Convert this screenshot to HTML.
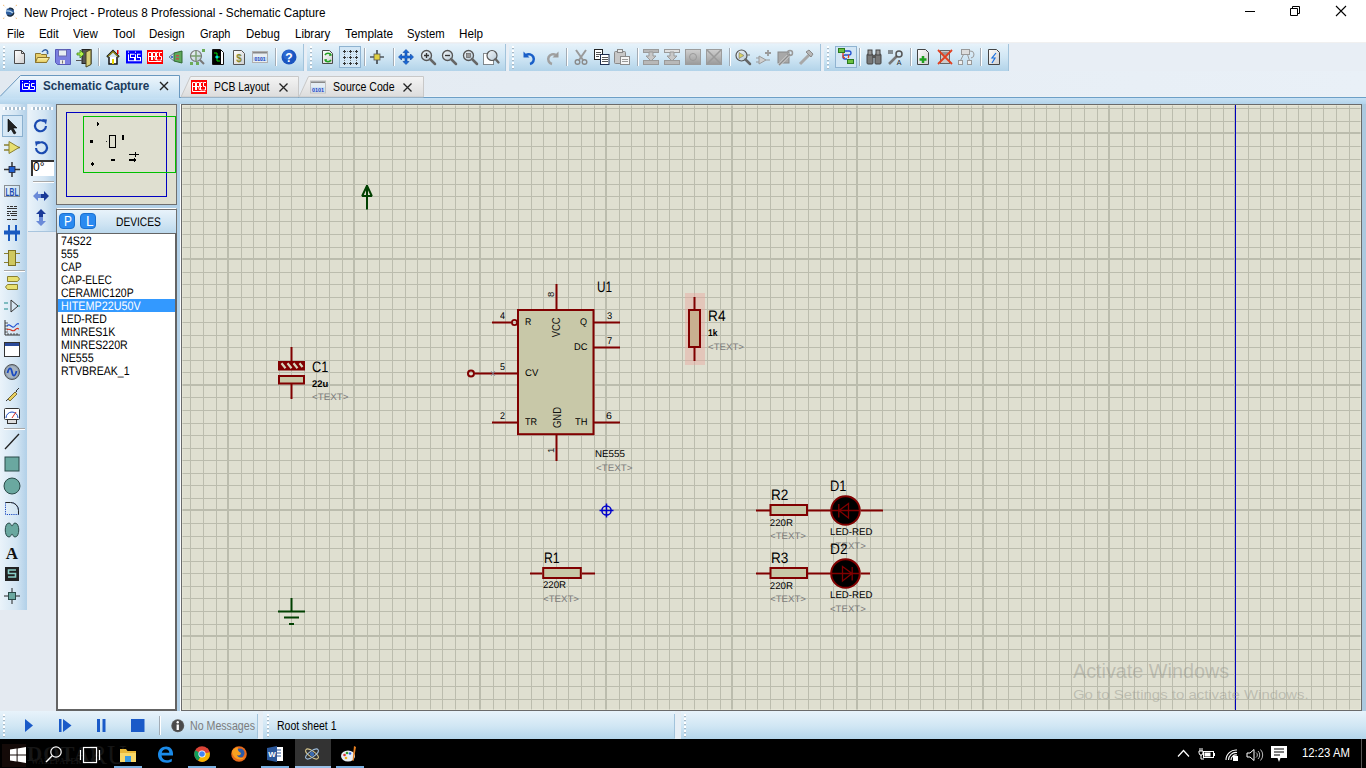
<!DOCTYPE html>
<html><head><meta charset="utf-8">
<style>
*{box-sizing:border-box;margin:0;padding:0}
html,body{width:1366px;height:768px;overflow:hidden;background:#e8eef5;font-family:"Liberation Sans",sans-serif;}
.a{position:absolute}
.t{position:absolute;white-space:nowrap;line-height:1}
svg{position:absolute;overflow:visible}
#title{left:0;top:0;width:1366px;height:42px;background:#fff}
#menuline{left:0;top:42px;width:1366px;height:1px;background:#f0f0f0}
.menu{font-size:12px;color:#000;top:28px}
.tb{top:44px;height:27px;background:linear-gradient(#e6f2fa,#d0e6f4 50%,#b2d3e9);border-right:1px solid #a2c3db}
.grip{width:3px;background:repeating-linear-gradient(#fff 0 2px,#a9b9c6 2px 3px,transparent 3px 4px);background-size:2px 4px;background-repeat:repeat-y}
.sep{width:2px;background:#a3acb5;border-right:1px solid #fff}
#tabstrip{left:0;top:71px;width:1366px;height:26px;background:linear-gradient(90deg,#e2e9f0,#e6edf4 50%,#e9f0f7)}
#tabline{left:0;top:96px;width:1366px;height:1px;background:#eaf1f6}
#tabline2{left:0;top:97px;width:1366px;height:1px;background:#6d9fc6}
#blueband{left:0;top:98px;width:1366px;height:6px;background:linear-gradient(#c6e1f5,#b3d3ea)}
#leftbg{left:0;top:104px;width:181px;height:607px;background:#e4eaf1}
#ovgap{left:56px;top:205px;width:125px;height:4px;background:#b3d1e8}
#col1{left:0;top:104px;width:27px;height:506px;background:linear-gradient(90deg,#eaf3fa,#d3e5f3 60%,#b2d0e8)}
#col2{left:28px;top:104px;width:28px;height:128px;background:linear-gradient(90deg,#eaf3fa,#d3e5f3 60%,#b2d0e8);border-bottom:1px solid #a8c5de}
#overview{left:56px;top:104px;width:121px;height:101px;background:#dfdfd0;border:1px solid #6f6f6f}
#devhdr{left:56px;top:208px;width:121px;height:26px;background:linear-gradient(#eaf4fb,#cfe4f3 60%,#b9d7ec);border-top:1px solid #fff;border-left:1px solid #6f6f6f;border-right:1px solid #6f6f6f}
#devhdr::before{content:"";position:absolute;left:-1px;right:-1px;top:0;height:1px;background:#6f6f6f}
#devlist{left:56px;top:233px;width:121px;height:478px;background:#fff;border:2px solid #646464;border-top:1px solid #646464}
.dev{font-size:11px;left:3px;color:#000}
#bluestrip{left:177px;top:104px;width:4px;height:607px;background:#b3d1e8}
#whiteline{left:180px;top:104px;width:1px;height:607px;background:#fafcfe}
#canvas{left:181px;top:104px;width:1181px;height:607px;background:#dfdfd0;border:1px solid #6a6a6a;overflow:hidden}
.grid{left:0;top:0}
#rightstrip{left:1362px;top:104px;width:4px;height:607px;background:#abc9df}
#status{left:0;top:711px;width:1366px;height:28px;background:linear-gradient(#e8f3fb,#d0e6f4 55%,#b4d5ea)}
#taskbar{left:0;top:739px;width:1366px;height:29px;background:#000}
.lbl{font-size:10px;color:#111}
.big{font-size:15px;color:#111}
.gt{font-size:9.5px;color:#8a8a8a}
</style></head><body>
<div id="title" class="a"></div>
<div id="menuline" class="a"></div>
<div class="t" style="left:23.50px;top:6.59px;font-size:12px;color:#000;transform:scaleX(0.9764);transform-origin:0 0;">New Project - Proteus 8 Professional - Schematic Capture</div>
<div class="t" style="left:7.30px;top:27.89px;font-size:12px;color:#000;transform:scaleX(0.9171);transform-origin:0 0;">File</div>
<div class="t" style="left:39.30px;top:27.89px;font-size:12px;color:#000;transform:scaleX(0.9469);transform-origin:0 0;">Edit</div>
<div class="t" style="left:73.20px;top:27.89px;font-size:12px;color:#000;transform:scaleX(0.9574);transform-origin:0 0;">View</div>
<div class="t" style="left:112.60px;top:27.89px;font-size:12px;color:#000;transform:scaleX(1.0136);transform-origin:0 0;">Tool</div>
<div class="t" style="left:149.00px;top:27.89px;font-size:12px;color:#000;transform:scaleX(0.9572);transform-origin:0 0;">Design</div>
<div class="t" style="left:199.50px;top:27.89px;font-size:12px;color:#000;transform:scaleX(0.9132);transform-origin:0 0;">Graph</div>
<div class="t" style="left:245.50px;top:27.89px;font-size:12px;color:#000;transform:scaleX(0.9548);transform-origin:0 0;">Debug</div>
<div class="t" style="left:294.50px;top:27.89px;font-size:12px;color:#000;transform:scaleX(0.9591);transform-origin:0 0;">Library</div>
<div class="t" style="left:344.70px;top:27.89px;font-size:12px;color:#000;transform:scaleX(0.9877);transform-origin:0 0;">Template</div>
<div class="t" style="left:407.00px;top:27.89px;font-size:12px;color:#000;transform:scaleX(0.9400);transform-origin:0 0;">System</div>
<div class="t" style="left:459.30px;top:27.89px;font-size:12px;color:#000;transform:scaleX(0.9757);transform-origin:0 0;">Help</div>
<svg style="left:1244px;top:5px" width="104" height="14"><path d="M1 6.5h10" stroke="#000"/><path d="M46.5 3.5h7v7h-7z" fill="none" stroke="#000"/><path d="M48.5 3.5v-2h7v7h-2" fill="none" stroke="#000"/><path d="M92 1l10 10M102 1l-10 10" stroke="#000" stroke-width="1.1"/></svg>
<svg style="left:3px;top:4px" width="16" height="16"><path d="M0.5 1.3L13.3 14.3M13.3 1.3L0.5 14.3" stroke="#f0f0f0" stroke-width="1"/><g fill="#f6c88a"><rect x="0" y="0.8" width="1.2" height="1.2"/><rect x="12.8" y="0.8" width="1.2" height="1.2"/><rect x="0" y="13.8" width="1.2" height="1.2"/><rect x="12.8" y="13.8" width="1.2" height="1.2"/></g><circle cx="7" cy="8" r="4.1" fill="#2f5f9f"/><path d="M3.2 7.2c2-.8 4.5 0 7 2" stroke="#b8d8f0" stroke-width="1.3" fill="none"/><path d="M4.5 11.2a4 4 0 0 0 6.3-2.5" stroke="#1a2a3a" stroke-width="1.6" fill="none"/><path d="M6 4.3a4 4 0 0 1 4.5 2" stroke="#1a2a3a" stroke-width="1.2" fill="none"/></svg>
<svg width="0" height="0" style="position:absolute"><defs>
<linearGradient id="gdoc" x1="0" y1="0" x2="1" y2="1"><stop offset="0" stop-color="#fff"/><stop offset="1" stop-color="#cfcfcf"/></linearGradient>
<linearGradient id="gfold" x1="0" y1="0" x2="0" y2="1"><stop offset="0" stop-color="#fff6b0"/><stop offset="1" stop-color="#e3c85a"/></linearGradient>
<linearGradient id="gmag" x1="0" y1="0" x2="1" y2="1"><stop offset="0" stop-color="#f4f8fb"/><stop offset="1" stop-color="#b7c9d6"/></linearGradient>
<linearGradient id="ggray" x1="0" y1="0" x2="0" y2="1"><stop offset="0" stop-color="#cfcfcf"/><stop offset="1" stop-color="#9a9a9a"/></linearGradient>
</defs></svg><div class="a tb" style="left:0px;width:304px"></div>
<div class="a grip" style="left:3px;top:46px;height:23px"></div>
<div class="a tb" style="left:307px;width:199px"></div>
<div class="a grip" style="left:310px;top:46px;height:23px"></div>
<div class="a tb" style="left:509px;width:312px"></div>
<div class="a grip" style="left:512px;top:46px;height:23px"></div>
<div class="a tb" style="left:824px;width:185px"></div>
<div class="a grip" style="left:827px;top:46px;height:23px"></div>
<div class="a sep" style="left:98px;top:48px;height:18px"></div>
<div class="a sep" style="left:275px;top:48px;height:18px"></div>
<div class="a sep" style="left:364px;top:48px;height:18px"></div>
<div class="a sep" style="left:393px;top:48px;height:18px"></div>
<div class="a sep" style="left:566px;top:48px;height:18px"></div>
<div class="a sep" style="left:637px;top:48px;height:18px"></div>
<div class="a sep" style="left:729px;top:48px;height:18px"></div>
<div class="a sep" style="left:859px;top:48px;height:18px"></div>
<div class="a sep" style="left:910px;top:48px;height:18px"></div>
<div class="a sep" style="left:980px;top:48px;height:18px"></div>
<div class="a" style="left:339px;top:46px;width:22px;height:22px;background:#d2e6f5;border:1px solid #8fb3d1"></div>
<div class="a" style="left:835px;top:46px;width:22px;height:22px;background:#d2e6f5;border:1px solid #8fb3d1"></div>
<svg style="left:12px;top:49px" width="16" height="16" viewBox="0 0 16 16"><path d="M2.5 1.5h7l3 3v10h-10z" fill="url(#gdoc)" stroke="#4a4a4a"/><path d="M9.5 1.5v3h3" fill="none" stroke="#4a4a4a"/></svg>
<svg style="left:34px;top:49px" width="16" height="16" viewBox="0 0 16 16"><path d="M1.5 4.5h5l1 1h5v8h-11z" fill="#e8cf6a" stroke="#8a7530"/><path d="M3.5 8.5h12l-3 5h-11z" fill="url(#gfold)" stroke="#8a7530"/><path d="M8 3c2-3 5-3 6 0" fill="none" stroke="#2c5aa0" stroke-width="1.3"/><path d="M12.5 2.5l2.5 1.5-2 1.5z" fill="#2c5aa0"/></svg>
<svg style="left:55px;top:49px" width="16" height="16" viewBox="0 0 16 16"><path d="M0.5 0.5h15v15h-13l-2-2z" fill="#7b7fe0" stroke="#5558b8"/><rect x="3.5" y="1" width="8" height="6" fill="#e8eef2" stroke="#6a6ab0"/><rect x="5" y="11" width="5" height="4" fill="#e8e8e8"/><rect x="7" y="11.5" width="1" height="3" fill="#777"/></svg>
<svg style="left:76px;top:49px" width="16" height="16" viewBox="0 0 16 16"><rect x="6" y="0.5" width="9" height="14" fill="#555" stroke="#222"/><path d="M10 3l5-2.5v15l-5 2.5z" fill="#d7cf78" stroke="#4a4520"/><path d="M1 4h3v-3l4 4-4 4v-3h-3z" fill="#b6ef4a" stroke="#3a8a20" stroke-width=".8"/><path d="M0 11.5h6" stroke="#555"/></svg>
<svg style="left:105px;top:49px" width="16" height="16" viewBox="0 0 16 16"><path d="M2 8l6-6 6 6" fill="none" stroke="#111" stroke-width="2"/><path d="M4 8v7h8v-7" fill="#fff" stroke="#111" stroke-width="1.5"/><path d="M3 7.5l5-5 5 5" fill="none" stroke="#f0e020" stroke-width="1"/><rect x="7" y="10" width="2" height="5" fill="#e8d800"/><rect x="12" y="1" width="1.5" height="4" fill="#e00"/></svg>
<svg style="left:126px;top:49px" width="16" height="16" viewBox="0 0 16 16"><g transform="translate(0,1.5) scale(1,1.08)"><rect x="0" y="0" width="16" height="12" fill="#0000ff"/><g fill="none" stroke="#fff" stroke-width="1"><path d="M2.5 3.5V9.5H8.5V6.5H4.5V3.5H8.5M9.5 3.5V9.5H14.5V6.5H11.5V3.5H14.5"/></g><rect x="2" y="1" width="1" height="1" fill="#fff"/><rect x="9" y="1" width="1" height="1" fill="#fff"/></g></svg>
<svg style="left:147px;top:50px" width="16" height="14" viewBox="0 0 16 14"><rect x="0" y="0" width="16" height="14" fill="#ff0000"/><path d="M1.5 11.5V2.5H4.5V10M1.5 6.5H4.5M5.5 10V2.5H8.5V6.5H5.5M7.5 6.5L8.5 10M11.5 2.5H9.5V10H11.5M9.5 6.5H11M15 2.5H12.5V6.5H14.5V10H12.5M1.5 11.5H14.5" fill="none" stroke="#fff" stroke-width="1"/></svg>
<svg style="left:168px;top:49px" width="16" height="16" viewBox="0 0 16 16"><path d="M6 4l8-2v12l-8-2z" fill="#5fa85a" stroke="#2f6a30"/><rect x="8" y="6" width="3" height="1.5" fill="#c05050"/><rect x="8" y="9" width="3" height="1.5" fill="#c05050"/><path d="M6 4l-5 4 5 4" fill="none" stroke="#6d7a88"/><circle cx="4" cy="8" r="1" fill="#2050c0"/></svg>
<svg style="left:189px;top:49px" width="16" height="16" viewBox="0 0 16 16"><circle cx="7" cy="7" r="5.5" fill="url(#gmag)" stroke="#777" stroke-width="1.2"/><path d="M7 2v10M2 7h10" stroke="#7aa070" stroke-width="1.5"/><path d="M11 11l4 4" stroke="#777" stroke-width="2"/><rect x="13" y="0" width="3" height="3" fill="#6bab58"/><rect x="1" y="13" width="3" height="3" fill="#6bab58"/><rect x="7" y="13" width="3" height="3" fill="#6bab58"/></svg>
<svg style="left:211px;top:49px" width="16" height="16" viewBox="0 0 16 16"><path d="M1.5 0.5h8l3 3v12h-11z" fill="#fff" stroke="#111"/><rect x="2" y="1" width="8" height="14" fill="#000"/><path d="M3 4h3v8h3M4 8h5" stroke="#00e000" fill="none"/><circle cx="6" cy="8" r="1.5" fill="#00d8e8"/></svg>
<svg style="left:232px;top:49px" width="16" height="16" viewBox="0 0 16 16"><path d="M1.5 1.5h8l3 3v11h-11z" fill="url(#gdoc)" stroke="#555"/><text x="7" y="13" font-size="10" font-weight="bold" fill="#8b8b30" text-anchor="middle" font-family="Liberation Sans">$</text></svg>
<svg style="left:252px;top:49px" width="16" height="16" viewBox="0 0 16 16"><rect x="0.5" y="2.5" width="15" height="11" fill="#e8eef2" stroke="#b0b0b0"/><rect x="1" y="3" width="14" height="1.5" fill="#888"/><rect x="1" y="8" width="14" height="4" fill="#c8def0"/><text x="8" y="12" font-size="5" font-weight="bold" fill="#2040c0" text-anchor="middle" font-family="Liberation Sans">0101</text></svg>
<svg style="left:281px;top:49px" width="16" height="16" viewBox="0 0 16 16"><circle cx="8" cy="8" r="7.5" fill="#1a55c0"/><circle cx="7" cy="6" r="5" fill="#3a7ae0" opacity=".5"/><text x="8" y="13" font-size="12" font-weight="bold" fill="#fff" text-anchor="middle" font-family="Liberation Sans">?</text></svg>
<svg style="left:320px;top:49px" width="16" height="16" viewBox="0 0 16 16"><path d="M2.5 1.5h7l3 3v10h-10z" fill="url(#gdoc)" stroke="#4a4a4a"/><path d="M5 6a3.5 3.5 0 0 1 6 0M11 11a3.5 3.5 0 0 1-6 0" fill="none" stroke="#20a020" stroke-width="1.5"/><path d="M10 4l2 2.5-3 .5zM6 13l-2-2.5 3-.5z" fill="#20a020"/></svg>
<svg style="left:342px;top:49px" width="16" height="16" viewBox="0 0 16 16"><g fill="#333"><rect x="1" y="2" width="3" height="1"/><rect x="2" y="1" width="1" height="3"/><rect x="1" y="8" width="3" height="1"/><rect x="2" y="7" width="1" height="3"/><rect x="1" y="14" width="3" height="1"/><rect x="2" y="13" width="1" height="3"/><rect x="7" y="2" width="3" height="1"/><rect x="8" y="1" width="1" height="3"/><rect x="7" y="8" width="3" height="1"/><rect x="8" y="7" width="1" height="3"/><rect x="7" y="14" width="3" height="1"/><rect x="8" y="13" width="1" height="3"/><rect x="13" y="2" width="3" height="1"/><rect x="14" y="1" width="1" height="3"/><rect x="13" y="8" width="3" height="1"/><rect x="14" y="7" width="1" height="3"/><rect x="13" y="14" width="3" height="1"/><rect x="14" y="13" width="1" height="3"/><rect x="5" y="2" width="1" height="1" fill="#777"/><rect x="5" y="8" width="1" height="1" fill="#777"/><rect x="5" y="14" width="1" height="1" fill="#777"/><rect x="11" y="2" width="1" height="1" fill="#777"/><rect x="11" y="8" width="1" height="1" fill="#777"/><rect x="11" y="14" width="1" height="1" fill="#777"/><rect x="2" y="5" width="1" height="1" fill="#777"/><rect x="2" y="11" width="1" height="1" fill="#777"/><rect x="8" y="5" width="1" height="1" fill="#777"/><rect x="8" y="11" width="1" height="1" fill="#777"/><rect x="14" y="5" width="1" height="1" fill="#777"/><rect x="14" y="11" width="1" height="1" fill="#777"/></g></svg>
<svg style="left:369px;top:49px" width="16" height="16" viewBox="0 0 16 16"><path d="M8 1v14M1 8h14" stroke="#111" stroke-width="1.2"/><rect x="5" y="5" width="6" height="6" fill="#e0d040" stroke="#555" stroke-width=".8"/></svg>
<svg style="left:398px;top:49px" width="16" height="16" viewBox="0 0 16 16"><path d="M8 0.5l3 3h-2v3.5h3.5v-2l3 3-3 3v-2h-3.5v3.5h2l-3 3-3-3h2v-3.5h-3.5v2l-3-3 3-3v2h3.5v-3.5h-2z" fill="#1a6ad8" stroke="#0b3f9a" stroke-width=".6"/></svg>
<svg style="left:420px;top:49px" width="16" height="16" viewBox="0 0 16 16"><circle cx="6.5" cy="6.5" r="5" fill="url(#gmag)" stroke="#555" stroke-width="1.3"/><path d="M4 6.5h5M6.5 4v5" stroke="#333" stroke-width="1.3"/><path d="M10 10l5 5" stroke="#666" stroke-width="2.5" stroke-linecap="round"/></svg>
<svg style="left:441px;top:49px" width="16" height="16" viewBox="0 0 16 16"><circle cx="6.5" cy="6.5" r="5" fill="url(#gmag)" stroke="#555" stroke-width="1.3"/><path d="M4 6.5h5" stroke="#333" stroke-width="1.3"/><path d="M10 10l5 5" stroke="#666" stroke-width="2.5" stroke-linecap="round"/></svg>
<svg style="left:462px;top:49px" width="16" height="16" viewBox="0 0 16 16"><circle cx="6.5" cy="6.5" r="5" fill="url(#gmag)" stroke="#555" stroke-width="1.3"/><rect x="4.5" y="4.5" width="4" height="4" fill="#999" stroke="#555" stroke-width=".6"/><path d="M10 10l5 5" stroke="#666" stroke-width="2.5" stroke-linecap="round"/></svg>
<svg style="left:483px;top:49px" width="16" height="16" viewBox="0 0 16 16"><rect x="0.5" y="4.5" width="10" height="11" fill="#fff" stroke="#222" stroke-dasharray="1 1"/><circle cx="9" cy="6.5" r="5" fill="url(#gmag)" stroke="#555" stroke-width="1.2"/><path d="M12.5 10l3 3.5" stroke="#666" stroke-width="2.3" stroke-linecap="round"/></svg>
<svg style="left:522px;top:49px" width="16" height="16" viewBox="0 0 16 16"><path d="M3 3v5h5" fill="none" stroke="#1a5fc8" stroke-width="0"/><path d="M1.5 2.5l0 6 6 0z" fill="#1a5fc8"/><path d="M4 6a5 5 0 1 1 4 9" fill="none" stroke="#1a5fc8" stroke-width="2.5"/></svg>
<svg style="left:544px;top:49px" width="16" height="16" viewBox="0 0 16 16"><path d="M14.5 2.5l0 6-6 0z" fill="#9a9a9a"/><path d="M12 6a5 5 0 1 0-4 9" fill="none" stroke="#a0a0a0" stroke-width="2.5"/></svg>
<svg style="left:573px;top:49px" width="16" height="16" viewBox="0 0 16 16"><path d="M3 1l7 10M13 1l-7 10" stroke="#9a9a9a" stroke-width="2"/><circle cx="4.5" cy="13" r="2.3" fill="none" stroke="#8a8a8a" stroke-width="1.4"/><circle cx="11.5" cy="13" r="2.3" fill="none" stroke="#8a8a8a" stroke-width="1.4"/></svg>
<svg style="left:594px;top:49px" width="16" height="16" viewBox="0 0 16 16"><rect x="0.5" y="0.5" width="8" height="10" fill="#fff" stroke="#222"/><g fill="#555"><rect x="2" y="3" width="5" height="1"/><rect x="2" y="5" width="5" height="1"/><rect x="2" y="7" width="3" height="1"/></g><rect x="6.5" y="5.5" width="8.5" height="10" fill="#fff" stroke="#1e2e50"/><g fill="#555"><rect x="8" y="8" width="6" height="1"/><rect x="8" y="10" width="6" height="1"/><rect x="8" y="12" width="6" height="1"/></g></svg>
<svg style="left:614px;top:49px" width="16" height="16" viewBox="0 0 16 16"><rect x="0.5" y="2.5" width="11" height="12" rx="1" fill="#c8c8c8" stroke="#8a8a8a"/><rect x="3.5" y="0.5" width="5" height="3" fill="#e8e8e8" stroke="#888"/><rect x="6.5" y="7.5" width="9" height="8" fill="#f6f6f6" stroke="#8a8a8a"/><g fill="#9a9a9a"><rect x="8" y="10" width="6" height="1"/><rect x="8" y="12" width="6" height="1"/></g></svg>
<svg style="left:643px;top:49px" width="16" height="16" viewBox="0 0 16 16"><rect x="0.5" y="0.5" width="15" height="3" fill="#b8b8b8" stroke="#9a9a9a"/><rect x="0.5" y="11.5" width="15" height="4" fill="#b8b8b8" stroke="#9a9a9a"/><path d="M6 3h4v4h3l-5 5-5-5h3z" fill="#c8c8c8" stroke="#9a9a9a"/></svg>
<svg style="left:664px;top:49px" width="16" height="16" viewBox="0 0 16 16"><rect x="0.5" y="0.5" width="15" height="3" fill="#e0e0e0" stroke="#9a9a9a"/><rect x="0.5" y="11.5" width="15" height="4" fill="#b8b8b8" stroke="#9a9a9a"/><path d="M6 3h4v4h3l-5 5-5-5h3z" fill="#c8c8c8" stroke="#9a9a9a"/></svg>
<svg style="left:685px;top:49px" width="16" height="16" viewBox="0 0 16 16"><rect x="0.5" y="0.5" width="15" height="15" fill="url(#ggray)" stroke="#9c9c9c"/><circle cx="8" cy="8" r="3.5" fill="none" stroke="#9a9a9a"/></svg>
<svg style="left:706px;top:49px" width="16" height="16" viewBox="0 0 16 16"><rect x="0.5" y="0.5" width="15" height="15" fill="url(#ggray)" stroke="#9c9c9c"/><path d="M1 1l14 14M15 1l-14 14" stroke="#9a9a9a" stroke-width="1.5"/></svg>
<svg style="left:735px;top:49px" width="16" height="16" viewBox="0 0 16 16"><circle cx="6.5" cy="6.5" r="5.5" fill="url(#gmag)" stroke="#555" stroke-width="1.2"/><path d="M4 3.5v6l5-3z" fill="#d8d060" stroke="#777" stroke-width=".6"/><path d="M10.5 10.5l4.5 4.5" stroke="#666" stroke-width="2.5" stroke-linecap="round"/><path d="M12 6h3" stroke="#777"/></svg>
<svg style="left:756px;top:49px" width="16" height="16" viewBox="0 0 16 16"><path d="M3 7v8l7-4z" fill="#cfcfcf" stroke="#9a9a9a"/><path d="M0 9h3M0 13h3M10 11h4" stroke="#9a9a9a"/><path d="M12 1v6M9 4h6" stroke="#9a9a9a" stroke-width="1.8"/></svg>
<svg style="left:777px;top:49px" width="16" height="16" viewBox="0 0 16 16"><rect x="1" y="3" width="11" height="11" fill="#a8a8a8" stroke="#888"/><path d="M2 16l11-11" stroke="#d0d0d0" stroke-width="3"/><path d="M2 16l11-11" stroke="#8a8a8a" stroke-width="1.5"/><circle cx="13" cy="4" r="2.5" fill="none" stroke="#9a9a9a" stroke-width="1.5"/></svg>
<svg style="left:798px;top:49px" width="16" height="16" viewBox="0 0 16 16"><path d="M2 15l9-9" stroke="#a8a8a8" stroke-width="3"/><path d="M8 3l3-2 4 4-2 3z" fill="#b8b8b8" stroke="#8a8a8a"/></svg>
<svg style="left:838px;top:48px" width="16" height="16" viewBox="0 0 16 16"><rect x="0.5" y="0.5" width="6" height="4" fill="#6cc040" stroke="#2a7a20"/><rect x="9.5" y="11.5" width="6" height="4" fill="#6cc040" stroke="#2a7a20"/><path d="M7 3h4a2 2 0 0 1 0 4h-4a2 2 0 0 0 0 4h2" fill="none" stroke="#2050d0" stroke-width="1.3"/><path d="M5 5v3a2 2 0 0 0 2 2M10 7a2 2 0 0 1 0 3" fill="none" stroke="#e04020" stroke-width="1.3"/></svg>
<svg style="left:866px;top:49px" width="16" height="16" viewBox="0 0 16 16"><rect x="1" y="5" width="6" height="10" rx="1" fill="#777" stroke="#444"/><rect x="9" y="5" width="6" height="10" rx="1" fill="#777" stroke="#444"/><rect x="2" y="1" width="4" height="5" fill="#999" stroke="#444"/><rect x="10" y="1" width="4" height="5" fill="#999" stroke="#444"/><rect x="6" y="6" width="4" height="3" fill="#555"/></svg>
<svg style="left:887px;top:49px" width="16" height="16" viewBox="0 0 16 16"><path d="M1 2h5M1 4h5" stroke="#333"/><path d="M2 15l8-8" stroke="#777" stroke-width="2.5"/><circle cx="12" cy="5" r="3" fill="none" stroke="#555" stroke-width="1.5"/><text x="12" y="16" font-size="7" fill="#222" text-anchor="middle" font-family="Liberation Sans">A</text></svg>
<svg style="left:916px;top:49px" width="14" height="16" viewBox="0 0 14 16"><path d="M1.5 0.5h8l3 3v12h-11z" fill="url(#gdoc)" stroke="#444"/><path d="M7 7v7M3.5 10.5h7" stroke="#20a020" stroke-width="2.5"/></svg>
<svg style="left:937px;top:49px" width="16" height="16" viewBox="0 0 16 16"><rect x="3.5" y="1.5" width="9" height="13" fill="#ccc" stroke="#666"/><rect x="5" y="3" width="6" height="3" fill="#999"/><path d="M1 1l14 14M15 1l-14 14" stroke="#e04020" stroke-width="1.8"/></svg>
<svg style="left:958px;top:49px" width="16" height="16" viewBox="0 0 16 16"><rect x="3.5" y="0.5" width="8" height="5" fill="#ddd" stroke="#999"/><rect x="0.5" y="11.5" width="4" height="4" fill="#eee" stroke="#999"/><rect x="9.5" y="11.5" width="4" height="4" fill="#eee" stroke="#999"/><path d="M2.5 11.5l3-6M11.5 11.5l-2-6M12 2a3 3 0 0 1 1 7" fill="none" stroke="#999"/></svg>
<svg style="left:987px;top:49px" width="14" height="16" viewBox="0 0 14 16"><path d="M1.5 0.5h8l3 3v12h-11z" fill="url(#gdoc)" stroke="#444"/><path d="M9 4l-4 5h3l-3 5" fill="none" stroke="#1a70e0" stroke-width="1.2"/></svg>

<div id="tabstrip" class="a"></div>
<div id="tabline" class="a"></div>
<div id="tabline2" class="a"></div>
<div id="blueband" class="a"></div>
<svg style="left:0;top:74px" width="182" height="24"><defs><linearGradient id="gtab" x1="0" y1="0" x2="0" y2="1"><stop offset="0" stop-color="#eef6fc"/><stop offset="1" stop-color="#c2def2"/></linearGradient>
<linearGradient id="gtab2" x1="0" y1="0" x2="0" y2="1"><stop offset="0" stop-color="#f4f4f4"/><stop offset="1" stop-color="#dcdcdc"/></linearGradient></defs>
<path d="M0 22.5L20.5 1.5H179.5V24H0z" fill="url(#gtab)"/><path d="M0 22.5L20.5 1.5H179.5V24" fill="none" stroke="#6a98bf"/></svg>
<svg style="left:20px;top:80px" width="16" height="12"><rect x="0" y="0" width="16" height="12" fill="#0000ff"/><g fill="none" stroke="#fff" stroke-width="1"><path d="M2.5 3.5V9.5H8.5V6.5H4.5V3.5H8.5M9.5 3.5V9.5H14.5V6.5H11.5V3.5H14.5"/></g><rect x="2" y="1" width="1" height="1" fill="#fff"/><rect x="9" y="1" width="1" height="1" fill="#fff"/></svg>
<div class="t" style="left:42.80px;top:79.63px;font-size:12.5px;color:#1b3b5c;font-weight:bold;transform:scaleX(0.9382);transform-origin:0 0;">Schematic Capture</div>
<svg style="left:159px;top:81px" width="10" height="10"><path d="M1 1l8 8M9 1l-8 8" stroke="#222" stroke-width="1.4"/></svg>
<svg style="left:180px;top:75px" width="120" height="23"><path d="M1 22L10.5 1.5H118.5V22z" fill="url(#gtab2)" stroke="#c8c8c8"/></svg>
<svg style="left:191px;top:80px" width="16" height="14"><rect x="0" y="0" width="16" height="14" fill="#ff0000"/><path d="M1.5 11.5V2.5H4.5V10M1.5 6.5H4.5M5.5 10V2.5H8.5V6.5H5.5M7.5 6.5L8.5 10M11.5 2.5H9.5V10H11.5M9.5 6.5H11M15 2.5H12.5V6.5H14.5V10H12.5M1.5 11.5H14.5" fill="none" stroke="#fff" stroke-width="1"/></svg>
<div class="t" style="left:213.50px;top:81.39px;font-size:12px;color:#000;transform:scaleX(0.8641);transform-origin:0 0;">PCB Layout</div>
<svg style="left:279px;top:83px" width="9" height="9"><path d="M.5 .5l8 8M8.5 .5l-8 8" stroke="#222" stroke-width="1.3"/></svg>
<svg style="left:298px;top:75px" width="128" height="23"><path d="M1 22L10.5 1.5H125.5V22z" fill="url(#gtab2)" stroke="#c8c8c8"/></svg>
<svg style="left:310px;top:80px" width="16" height="14"><rect x="0.5" y="1" width="15" height="12" fill="#e4ecf2" stroke="#c0c0c0"/><rect x="1" y="1.5" width="14" height="1.5" fill="#888"/><rect x="1" y="7" width="14" height="5" fill="#cfe2f2"/><text x="8" y="11.5" font-size="5.5" font-weight="bold" fill="#2040c0" text-anchor="middle" font-family="Liberation Sans">0101</text></svg>
<div class="t" style="left:332.50px;top:81.39px;font-size:12px;color:#000;transform:scaleX(0.8786);transform-origin:0 0;">Source Code</div>
<svg style="left:403px;top:83px" width="9" height="9"><path d="M.5 .5l8 8M8.5 .5l-8 8" stroke="#222" stroke-width="1.3"/></svg>

<div id="leftbg" class="a"></div>
<div id="col1" class="a"></div>
<div id="col2" class="a"></div>
<div class="a" style="left:3px;top:107px;width:22px;height:3px;background:repeating-linear-gradient(90deg,#fff 0 2px,#a8bfd2 2px 4px)"></div>
<div class="a" style="left:31px;top:107px;width:22px;height:3px;background:repeating-linear-gradient(90deg,#fff 0 2px,#a8bfd2 2px 4px)"></div>
<div class="a" style="left:2px;top:115px;width:21px;height:22px;background:#d6e8f6;border:1px solid #8bb0cf"></div>
<svg style="left:4px;top:118px" width="16" height="16" viewBox="0 0 16 16"><path d="M4 1v13l3-3 3 5 2-1-3-5h4z" fill="#222" stroke="#000" stroke-width=".6"/></svg>
<svg style="left:4px;top:140px" width="16" height="16" viewBox="0 0 16 16"><path d="M5 1.5v12l10-6z" fill="#e8e070" stroke="#8a8030"/><path d="M0 5h5M0 10h5M14 7.5h2" stroke="#8a8030" stroke-width="1.3"/></svg>
<svg style="left:4px;top:161px" width="16" height="16" viewBox="0 0 16 16"><path d="M8 1v15M0 8.5h16" stroke="#333" stroke-width="1.5"/><rect x="5" y="5.5" width="6" height="6" fill="#2060d0" stroke="#223" stroke-width=".8"/></svg>
<svg style="left:4px;top:183px" width="16" height="16" viewBox="0 0 16 16"><rect x=".5" y="2.5" width="15" height="11" fill="none" stroke="#333" stroke-dasharray="1 1"/><text x="8" y="12.5" font-size="11" font-weight="bold" fill="#1a4ab0" text-anchor="middle" font-family="Liberation Sans" textLength="13" lengthAdjust="spacingAndGlyphs">LBL</text></svg>
<svg style="left:4px;top:205px" width="16" height="16" viewBox="0 0 16 16"><path d="M3 1.5h2M6 1.5h3M10 1.5h3M3 3.5h10M3 6.5h4M8 6.5h5M3 8.5h2M6 8.5h7M3 10.5h3M7 10.5h6M3 14.5h4M8 14.5h5" stroke="#333" stroke-width="1.1"/></svg>
<svg style="left:4px;top:224px" width="16" height="18" viewBox="0 0 16 18"><path d="M5 1v16M12 1v16" stroke="#1a5ac0" stroke-width="2"/><rect x="0" y="6.5" width="16" height="4" fill="#1a5ac0"/></svg>
<div class="a" style="left:4px;top:270px;width:21px;height:2px;background:#a8a8a8;border-bottom:1px solid #fff"></div>
<div class="a" style="left:4px;top:428px;width:21px;height:2px;background:#a8a8a8;border-bottom:1px solid #fff"></div>
<svg style="left:4px;top:248px" width="16" height="19" viewBox="0 0 16 19"><path d="M0 5.5h16M0 14.5h16" stroke="#8a8030" stroke-width="1.2"/><rect x="4.5" y="2.5" width="7" height="15" fill="#cfc860" stroke="#7a7025"/></svg>
<svg style="left:4px;top:275px" width="16" height="16" viewBox="0 0 16 16"><path d="M3.5 1.5h10l2 2.5-2 2.5h-10z" fill="#e8e070" stroke="#8a8030"/><path d="M3.5 9.5h10v5h-10l-2-2.5z" fill="#e8e070" stroke="#8a8030"/></svg>
<svg style="left:4px;top:298px" width="16" height="16" viewBox="0 0 16 16"><path d="M7 2v12l7-6z" fill="none" stroke="#333"/><path d="M0 5h4M0 11h4M14 8h2" stroke="#1a8a8a" stroke-width="1.2"/></svg>
<svg style="left:4px;top:320px" width="16" height="16" viewBox="0 0 16 16"><path d="M1 0v15h15" fill="none" stroke="#333"/><path d="M1 3h3M1 6h3M1 9h3M1 12h3M4 15v-2M7 15v-2M10 15v-2M13 15v-2" stroke="#333" stroke-width=".8"/><path d="M3 6c3-4 5 4 8 0s3-2 4-2" fill="none" stroke="#2050d0" stroke-width="1.2"/><path d="M3 10c3-3 5 3 8 0s3-1 4-1" fill="none" stroke="#d03020" stroke-width="1.2"/></svg>
<svg style="left:4px;top:342px" width="16" height="16" viewBox="0 0 16 16"><rect x=".5" y=".5" width="15" height="14" fill="#fff" stroke="#333"/><rect x="1" y="1" width="14" height="3" fill="#2a4a9a"/></svg>
<svg style="left:4px;top:363px" width="16" height="18" viewBox="0 0 16 18"><circle cx="8" cy="9" r="7.5" fill="#8a9aaa" stroke="#555"/><circle cx="8" cy="9" r="6" fill="#a8b4c0"/><path d="M3.5 10c1.5-6 3.5-6 4.5-1s3 5 4.5-1" fill="none" stroke="#1a4ac0" stroke-width="1.8"/></svg>
<svg style="left:4px;top:386px" width="16" height="16" viewBox="0 0 16 16"><path d="M2 15l11-10" stroke="#333" stroke-width="1"/><path d="M4 13l7-7 2 2-7 7z" fill="#e8d060" stroke="#665520" stroke-width=".8"/><path d="M12 5l3-3" stroke="#333"/></svg>
<svg style="left:4px;top:408px" width="16" height="16" viewBox="0 0 16 16"><rect x=".5" y=".5" width="15" height="11" rx="1" fill="#fff" stroke="#333"/><path d="M2 10a6 6 0 0 1 12 0" fill="none" stroke="#2050c0"/><path d="M8 10l4-6" stroke="#e03020"/><rect x="3.5" y="11.5" width="9" height="4" fill="#ddd" stroke="#333"/></svg>
<svg style="left:4px;top:433px" width="16" height="17" viewBox="0 0 16 17"><path d="M1 16l14-15" stroke="#222" stroke-width="1.3"/></svg>
<svg style="left:4px;top:456px" width="16" height="16" viewBox="0 0 16 16"><rect x="1" y="1" width="14" height="14" fill="#6aa8a0" stroke="#2a4a48"/></svg>
<svg style="left:3px;top:477px" width="18" height="18" viewBox="0 0 18 18"><circle cx="9" cy="9" r="8" fill="#6aa8a0" stroke="#2a4a48"/></svg>
<svg style="left:4px;top:501px" width="16" height="15" viewBox="0 0 16 15"><path d="M1.5 13.5v-12h5a8 8 0 0 1 8 8v4z" fill="none" stroke="#1a4ac0" stroke-dasharray="1.2 1"/><path d="M1.5 1.5h5a8 8 0 0 1 8 8v4" fill="none" stroke="#222"/></svg>
<svg style="left:4px;top:522px" width="16" height="16" viewBox="0 0 16 16"><path d="M5 1c-5 0-5 14 0 14 2 0 2-3 3-3s1 3 3 3c5 0 5-14 0-14-2 0-2 3-3 3s-1-3-3-3z" fill="#6aa8a0" stroke="#2a4a48"/></svg>
<svg style="left:4px;top:544px" width="16" height="16" viewBox="0 0 16 16"><text x="8" y="15" font-size="17" font-weight="bold" fill="#111" text-anchor="middle" font-family="Liberation Serif">A</text></svg>
<svg style="left:4px;top:566px" width="16" height="16" viewBox="0 0 16 16"><rect x="1" y="1" width="14" height="14" fill="#222"/><path d="M12 4h-7.5v3.5h7v3.5h-7.5" fill="none" stroke="#8ad0c8" stroke-width="1.6"/></svg>
<svg style="left:4px;top:588px" width="16" height="16" viewBox="0 0 16 16"><path d="M8 0v16M0 8h16" stroke="#222"/><rect x="4.5" y="4.5" width="7" height="7" fill="#6aa8a0" stroke="#2a4a48"/></svg>
<svg style="left:33px;top:118px" width="16" height="16" viewBox="0 0 16 16"><path d="M13 8a5.5 5.5 0 1 1-2-4.5" fill="none" stroke="#1a4ab0" stroke-width="2.2"/><path d="M9 1l5 .5-1 5z" fill="#1a4ab0"/></svg>
<svg style="left:33px;top:140px" width="16" height="16" viewBox="0 0 16 16"><path d="M3 8a5.5 5.5 0 1 0 2-4.5" fill="none" stroke="#1a4ab0" stroke-width="2.2"/><path d="M7 1l-5 .5 1 5z" fill="#1a4ab0"/></svg>
<div class="a" style="left:31px;top:160px;width:23px;height:16px;background:#fff;border-top:2px solid #333;border-left:2px solid #333"></div>
<div class="t" style="left:33px;top:161px;font-size:12px;color:#000">0°</div>
<div class="a" style="left:33px;top:181px;width:21px;height:2px;background:#a8a8a8;border-bottom:1px solid #fff"></div>
<svg style="left:33px;top:188px" width="16" height="16" viewBox="0 0 16 16"><path d="M0 8l5-5v3h3v4h-3v3z" fill="#6a8ad8"/><path d="M16 8l-5-5v3h-3v4h3v3z" fill="#1a3a98"/></svg>
<svg style="left:33px;top:209px" width="16" height="17" viewBox="0 0 16 17"><path d="M8 0l5 5h-3v3h-4v-3h-3z" fill="#1a3a98"/><path d="M8 17l5-5h-3v-4h-4v4h-3z" fill="#6a8ad8"/></svg>
<div id="ovgap" class="a"></div>
<div id="overview" class="a"></div>
<div id="devhdr" class="a"></div>
<svg style="left:56px;top:104px" width="121" height="101" shape-rendering="crispEdges"><rect x="10.5" y="8.5" width="100" height="84" fill="none" stroke="#0000c0"/><rect x="27.5" y="12.5" width="92" height="56" fill="none" stroke="#00c000"/><path d="M41 18v4l2-2z" fill="#000"/><rect x="34" y="36" width="3" height="3" fill="#000"/><rect x="53.5" y="31.5" width="6" height="12" fill="none" stroke="#000"/><rect x="50" y="37" width="1" height="1" fill="#333"/><rect x="66" y="31" width="2" height="5" fill="#000"/><path d="M36.5 58l2 2-2 2-2-2z" fill="#000"/><rect x="55" y="55" width="4" height="2" fill="#000"/><rect x="73" y="50" width="10" height="1" fill="#000"/><rect x="79" y="48" width="1" height="5" fill="#000"/><rect x="73" y="55" width="5" height="2" fill="#000"/><path d="M78 54l3 2-3 2z" fill="#000"/></svg>
<div class="a" style="left:59px;top:213px;width:16px;height:16px;border-radius:4px;background:#2a8af0;border:1px solid #1a70d0"></div>
<div class="a" style="left:80px;top:213px;width:16px;height:16px;border-radius:4px;background:#2a8af0;border:1px solid #1a70d0"></div>
<div class="t" style="left:64.00px;top:213.24px;font-size:15px;color:#fff;transform:scaleX(0.7900);transform-origin:0 0;">P</div>
<div class="t" style="left:85.50px;top:213.24px;font-size:15px;color:#fff;transform:scaleX(0.9036);transform-origin:0 0;">L</div>
<div class="t" style="left:115.70px;top:215.74px;font-size:12.4px;color:#000;transform:scaleX(0.8254);transform-origin:0 0;text-rendering:geometricPrecision;">DEVICES</div>
<div id="devlist" class="a">
<div class="a" style="left:0;top:65px;width:117px;height:13px;background:#3399ff"></div>
<div class="t" style="left:2.50px;top:1.45px;font-size:12.3px;color:#000;transform:scaleX(0.8624);transform-origin:0 0;text-rendering:geometricPrecision;">74S22</div>
<div class="t" style="left:2.50px;top:14.40px;font-size:12.3px;color:#000;transform:scaleX(0.8585);transform-origin:0 0;text-rendering:geometricPrecision;">555</div>
<div class="t" style="left:2.50px;top:27.35px;font-size:12.3px;color:#000;transform:scaleX(0.8142);transform-origin:0 0;text-rendering:geometricPrecision;">CAP</div>
<div class="t" style="left:2.50px;top:40.30px;font-size:12.3px;color:#000;transform:scaleX(0.8276);transform-origin:0 0;text-rendering:geometricPrecision;">CAP-ELEC</div>
<div class="t" style="left:2.50px;top:53.25px;font-size:12.3px;color:#000;transform:scaleX(0.8501);transform-origin:0 0;text-rendering:geometricPrecision;">CERAMIC120P</div>
<div class="t" style="left:2.50px;top:66.20px;font-size:12.3px;color:#fff;transform:scaleX(0.8757);transform-origin:0 0;text-rendering:geometricPrecision;">HITEMP22U50V</div>
<div class="t" style="left:2.50px;top:79.15px;font-size:12.3px;color:#000;transform:scaleX(0.8500);transform-origin:0 0;text-rendering:geometricPrecision;">LED-RED</div>
<div class="t" style="left:2.50px;top:92.10px;font-size:12.3px;color:#000;transform:scaleX(0.8649);transform-origin:0 0;text-rendering:geometricPrecision;">MINRES1K</div>
<div class="t" style="left:2.50px;top:105.05px;font-size:12.3px;color:#000;transform:scaleX(0.8640);transform-origin:0 0;text-rendering:geometricPrecision;">MINRES220R</div>
<div class="t" style="left:2.50px;top:118.00px;font-size:12.3px;color:#000;transform:scaleX(0.8697);transform-origin:0 0;text-rendering:geometricPrecision;">NE555</div>
<div class="t" style="left:2.50px;top:130.95px;font-size:12.3px;color:#000;transform:scaleX(0.8609);transform-origin:0 0;text-rendering:geometricPrecision;">RTVBREAK_1</div>
</div>
<div id="bluestrip" class="a"></div>
<div id="whiteline" class="a"></div>
<div id="rightstrip" class="a"></div>
<div id="canvas" class="a">
<svg class="grid" width="1179" height="605" shape-rendering="crispEdges"><g fill="#bbbcad"><rect x="8" y="0" width="1" height="605"/><rect x="21" y="0" width="1" height="605"/><rect x="34" y="0" width="1" height="605"/><rect x="45" y="0" width="2" height="605"/><rect x="59" y="0" width="1" height="605"/><rect x="71" y="0" width="1" height="605"/><rect x="84" y="0" width="1" height="605"/><rect x="97" y="0" width="1" height="605"/><rect x="109" y="0" width="1" height="605"/><rect x="122" y="0" width="1" height="605"/><rect x="134" y="0" width="1" height="605"/><rect x="147" y="0" width="1" height="605"/><rect x="160" y="0" width="1" height="605"/><rect x="171" y="0" width="2" height="605"/><rect x="185" y="0" width="1" height="605"/><rect x="197" y="0" width="1" height="605"/><rect x="210" y="0" width="1" height="605"/><rect x="223" y="0" width="1" height="605"/><rect x="235" y="0" width="1" height="605"/><rect x="248" y="0" width="1" height="605"/><rect x="260" y="0" width="1" height="605"/><rect x="273" y="0" width="1" height="605"/><rect x="286" y="0" width="1" height="605"/><rect x="297" y="0" width="2" height="605"/><rect x="311" y="0" width="1" height="605"/><rect x="323" y="0" width="1" height="605"/><rect x="336" y="0" width="1" height="605"/><rect x="349" y="0" width="1" height="605"/><rect x="361" y="0" width="1" height="605"/><rect x="374" y="0" width="1" height="605"/><rect x="386" y="0" width="1" height="605"/><rect x="399" y="0" width="1" height="605"/><rect x="412" y="0" width="1" height="605"/><rect x="423" y="0" width="2" height="605"/><rect x="437" y="0" width="1" height="605"/><rect x="449" y="0" width="1" height="605"/><rect x="462" y="0" width="1" height="605"/><rect x="475" y="0" width="1" height="605"/><rect x="487" y="0" width="1" height="605"/><rect x="500" y="0" width="1" height="605"/><rect x="512" y="0" width="1" height="605"/><rect x="525" y="0" width="1" height="605"/><rect x="538" y="0" width="1" height="605"/><rect x="549" y="0" width="2" height="605"/><rect x="563" y="0" width="1" height="605"/><rect x="575" y="0" width="1" height="605"/><rect x="588" y="0" width="1" height="605"/><rect x="601" y="0" width="1" height="605"/><rect x="613" y="0" width="1" height="605"/><rect x="626" y="0" width="1" height="605"/><rect x="638" y="0" width="1" height="605"/><rect x="651" y="0" width="1" height="605"/><rect x="664" y="0" width="1" height="605"/><rect x="674" y="0" width="2" height="605"/><rect x="688" y="0" width="1" height="605"/><rect x="700" y="0" width="1" height="605"/><rect x="713" y="0" width="1" height="605"/><rect x="726" y="0" width="1" height="605"/><rect x="738" y="0" width="1" height="605"/><rect x="751" y="0" width="1" height="605"/><rect x="763" y="0" width="1" height="605"/><rect x="776" y="0" width="1" height="605"/><rect x="789" y="0" width="1" height="605"/><rect x="800" y="0" width="2" height="605"/><rect x="814" y="0" width="1" height="605"/><rect x="826" y="0" width="1" height="605"/><rect x="839" y="0" width="1" height="605"/><rect x="852" y="0" width="1" height="605"/><rect x="864" y="0" width="1" height="605"/><rect x="877" y="0" width="1" height="605"/><rect x="889" y="0" width="1" height="605"/><rect x="902" y="0" width="1" height="605"/><rect x="915" y="0" width="1" height="605"/><rect x="926" y="0" width="2" height="605"/><rect x="940" y="0" width="1" height="605"/><rect x="952" y="0" width="1" height="605"/><rect x="965" y="0" width="1" height="605"/><rect x="978" y="0" width="1" height="605"/><rect x="990" y="0" width="1" height="605"/><rect x="1003" y="0" width="1" height="605"/><rect x="1015" y="0" width="1" height="605"/><rect x="1028" y="0" width="1" height="605"/><rect x="1041" y="0" width="1" height="605"/><rect x="1052" y="0" width="2" height="605"/><rect x="1066" y="0" width="1" height="605"/><rect x="1078" y="0" width="1" height="605"/><rect x="1091" y="0" width="1" height="605"/><rect x="1104" y="0" width="1" height="605"/><rect x="1116" y="0" width="1" height="605"/><rect x="1129" y="0" width="1" height="605"/><rect x="1141" y="0" width="1" height="605"/><rect x="1154" y="0" width="1" height="605"/><rect x="1167" y="0" width="1" height="605"/><rect x="0" y="3" width="1179" height="1"/><rect x="0" y="16" width="1179" height="1"/><rect x="0" y="27" width="1179" height="2"/><rect x="0" y="41" width="1179" height="1"/><rect x="0" y="54" width="1179" height="1"/><rect x="0" y="66" width="1179" height="1"/><rect x="0" y="79" width="1179" height="1"/><rect x="0" y="91" width="1179" height="1"/><rect x="0" y="104" width="1179" height="1"/><rect x="0" y="116" width="1179" height="1"/><rect x="0" y="129" width="1179" height="1"/><rect x="0" y="142" width="1179" height="1"/><rect x="0" y="153" width="1179" height="2"/><rect x="0" y="167" width="1179" height="1"/><rect x="0" y="179" width="1179" height="1"/><rect x="0" y="192" width="1179" height="1"/><rect x="0" y="204" width="1179" height="1"/><rect x="0" y="217" width="1179" height="1"/><rect x="0" y="230" width="1179" height="1"/><rect x="0" y="242" width="1179" height="1"/><rect x="0" y="255" width="1179" height="1"/><rect x="0" y="267" width="1179" height="1"/><rect x="0" y="279" width="1179" height="2"/><rect x="0" y="292" width="1179" height="1"/><rect x="0" y="305" width="1179" height="1"/><rect x="0" y="318" width="1179" height="1"/><rect x="0" y="330" width="1179" height="1"/><rect x="0" y="343" width="1179" height="1"/><rect x="0" y="355" width="1179" height="1"/><rect x="0" y="368" width="1179" height="1"/><rect x="0" y="380" width="1179" height="1"/><rect x="0" y="393" width="1179" height="1"/><rect x="0" y="404" width="1179" height="2"/><rect x="0" y="418" width="1179" height="1"/><rect x="0" y="431" width="1179" height="1"/><rect x="0" y="443" width="1179" height="1"/><rect x="0" y="456" width="1179" height="1"/><rect x="0" y="468" width="1179" height="1"/><rect x="0" y="481" width="1179" height="1"/><rect x="0" y="493" width="1179" height="1"/><rect x="0" y="506" width="1179" height="1"/><rect x="0" y="519" width="1179" height="1"/><rect x="0" y="530" width="1179" height="2"/><rect x="0" y="544" width="1179" height="1"/><rect x="0" y="556" width="1179" height="1"/><rect x="0" y="569" width="1179" height="1"/><rect x="0" y="581" width="1179" height="1"/><rect x="0" y="594" width="1179" height="1"/></g></svg>
<div class="a" style="left:0;top:0;right:0;bottom:0;border:1px solid rgba(240,240,225,0.4)"></div>
</div>
<svg style="left:0;top:0" width="1366" height="768"><rect x="685" y="293" width="20" height="72" fill="#e8a8a0" fill-opacity="0.45"/><path d="M362.2 196L367 185.8L371.8 196Z" fill="none" stroke="#004000" stroke-width="2" stroke-linejoin="bevel"/><path d="M367 185V209.5" stroke="#004000" stroke-width="2"/><path d="M291.5 347V361M291.5 384V399" stroke="#800000" stroke-width="2"/><rect x="279" y="362" width="25" height="7.5" fill="#800000" stroke="#800000" stroke-width="2"/><path d="M281.5 363.3L285.5 368.2M287.5 363.3L291.5 368.2M293.5 363.3L297.5 368.2M299.5 363.3L302.5 367" stroke="#d6d6be" stroke-width="2.2"/><rect x="279" y="376" width="25" height="7.5" fill="#c8c8a8" stroke="#800000" stroke-width="2"/><rect x="518" y="310" width="75.5" height="124.2" fill="#c8c8a8" stroke="#800000" stroke-width="2"/><path d="M556.5 284V310M556.5 435V461M492 322.5H511.5M475 373.5H518M492 422.5H518M594 322.5H620M594 347.5H620M594 422.5H620" stroke="#800000" stroke-width="2"/><circle cx="514.5" cy="322.5" r="2.6" fill="none" stroke="#800000" stroke-width="1.8"/><circle cx="471" cy="373.5" r="3" fill="none" stroke="#800000" stroke-width="2"/><path d="M491 371l4 5M495 371l-4 5" stroke="#7a8aa0" stroke-width=".8"/><rect x="689" y="310" width="11" height="37" fill="#c8b090" stroke="#800000" stroke-width="2"/><path d="M694.5 297V309M694.5 348V361" stroke="#800000" stroke-width="2"/><rect x="543.2" y="568" width="37.6" height="10" fill="#c8c8a8" stroke="#800000" stroke-width="2"/><path d="M530 573.5H542M582 573.5H595" stroke="#800000" stroke-width="2"/><rect x="770.5" y="505" width="36.5" height="10" fill="#c8c8a8" stroke="#800000" stroke-width="2"/><path d="M756 510.5H770M807 510.5H831M861 510.5H883" stroke="#800000" stroke-width="2"/><circle cx="845.5" cy="510.5" r="14.3" fill="#000" stroke="#800000" stroke-width="2"/><path d="M831 510.5H860M838.8 504V517.5M839 510.5L848.5 503.5V518Z" fill="none" stroke="#800000" stroke-width="1.3"/><rect x="770.5" y="568" width="36.5" height="10" fill="#c8c8a8" stroke="#800000" stroke-width="2"/><path d="M756 573.5H770M807 573.5H831M861 573.5H870" stroke="#800000" stroke-width="2"/><circle cx="845.5" cy="573.5" r="14.3" fill="#000" stroke="#800000" stroke-width="2"/><path d="M831 573.5H860M852.2 567V580.5M852 573.5L842.5 566.5V581Z" fill="none" stroke="#800000" stroke-width="1.3"/><path d="M291.5 598V611M278 611.5H305M284 617.5H299M289 624H294" stroke="#004000" stroke-width="2"/><g stroke="#0000cc" stroke-width="1.5" fill="none"><path d="M599.5 510.5H613.5M606.5 503.5V517.5"/><circle cx="606.5" cy="510.5" r="4.6"/></g><rect x="1235" y="105" width="1" height="605" fill="#0000c0"/><g font-family="Liberation Sans" fill="#111"><text transform="translate(554.3,297) rotate(-90)" font-size="9.5">8</text><text transform="translate(560.3,337.3) rotate(-90)" font-size="10" textLength="20" lengthAdjust="spacingAndGlyphs">VCC</text><text transform="translate(561.2,428) rotate(-90)" font-size="10" textLength="21" lengthAdjust="spacingAndGlyphs">GND</text><text transform="translate(554,453) rotate(-90)" font-size="9.5">1</text></g></svg>
<div class="t" style="left:596.90px;top:280.23px;font-size:15.1px;color:#000;transform:scaleX(0.7824);transform-origin:0 0;text-rendering:geometricPrecision;">U1</div>
<div class="t" style="left:500.00px;top:311.86px;font-size:9.7px;color:#000;transform:scaleX(0.9259);transform-origin:0 0;text-rendering:geometricPrecision;">4</div>
<div class="t" style="left:606.80px;top:311.86px;font-size:9.7px;color:#000;transform:scaleX(0.9630);transform-origin:0 0;text-rendering:geometricPrecision;">3</div>
<div class="t" style="left:606.80px;top:336.86px;font-size:9.7px;color:#000;transform:scaleX(0.9630);transform-origin:0 0;text-rendering:geometricPrecision;">7</div>
<div class="t" style="left:500.00px;top:362.86px;font-size:9.7px;color:#000;transform:scaleX(0.9259);transform-origin:0 0;text-rendering:geometricPrecision;">5</div>
<div class="t" style="left:500.00px;top:412.46px;font-size:9.7px;color:#000;transform:scaleX(0.9259);transform-origin:0 0;text-rendering:geometricPrecision;">2</div>
<div class="t" style="left:606.40px;top:412.46px;font-size:9.7px;color:#000;transform:scaleX(1.0926);transform-origin:0 0;text-rendering:geometricPrecision;">6</div>
<div class="t" style="left:524.70px;top:318.46px;font-size:9.7px;color:#000;transform:scaleX(0.9000);transform-origin:0 0;text-rendering:geometricPrecision;">R</div>
<div class="t" style="left:580.00px;top:318.46px;font-size:9.7px;color:#000;transform:scaleX(0.9333);transform-origin:0 0;text-rendering:geometricPrecision;">Q</div>
<div class="t" style="left:573.50px;top:342.86px;font-size:9.7px;color:#000;transform:scaleX(0.9643);transform-origin:0 0;text-rendering:geometricPrecision;">DC</div>
<div class="t" style="left:524.70px;top:368.86px;font-size:9.7px;color:#000;transform:scaleX(0.9852);transform-origin:0 0;text-rendering:geometricPrecision;">CV</div>
<div class="t" style="left:525.00px;top:417.86px;font-size:9.7px;color:#000;transform:scaleX(0.9302);transform-origin:0 0;text-rendering:geometricPrecision;">TR</div>
<div class="t" style="left:575.00px;top:417.86px;font-size:9.7px;color:#000;transform:scaleX(0.9612);transform-origin:0 0;text-rendering:geometricPrecision;">TH</div>
<div class="t" style="left:595.40px;top:449.86px;font-size:9.7px;color:#000;transform:scaleX(1.0101);transform-origin:0 0;text-rendering:geometricPrecision;">NE555</div>
<div class="t" style="left:595.90px;top:463.30px;font-size:9.4px;color:#7c7c7c;transform:scaleX(1.0457);transform-origin:0 0;text-rendering:geometricPrecision;">&lt;TEXT&gt;</div>
<div class="t" style="left:312.00px;top:360.03px;font-size:15.1px;color:#000;transform:scaleX(0.8446);transform-origin:0 0;text-rendering:geometricPrecision;">C1</div>
<div class="t" style="left:311.70px;top:379.86px;font-size:9.7px;color:#000;font-weight:bold;transform:scaleX(0.9760);transform-origin:0 0;text-rendering:geometricPrecision;">22u</div>
<div class="t" style="left:311.70px;top:392.30px;font-size:9.4px;color:#7c7c7c;transform:scaleX(1.0429);transform-origin:0 0;text-rendering:geometricPrecision;">&lt;TEXT&gt;</div>
<div class="t" style="left:708.40px;top:309.33px;font-size:15.1px;color:#000;transform:scaleX(0.9067);transform-origin:0 0;text-rendering:geometricPrecision;">R4</div>
<div class="t" style="left:708.40px;top:328.86px;font-size:9.7px;color:#000;font-weight:bold;transform:scaleX(0.8716);transform-origin:0 0;text-rendering:geometricPrecision;">1k</div>
<div class="t" style="left:707.90px;top:341.90px;font-size:9.4px;color:#7c7c7c;transform:scaleX(1.0314);transform-origin:0 0;text-rendering:geometricPrecision;">&lt;TEXT&gt;</div>
<div class="t" style="left:543.50px;top:551.13px;font-size:15.1px;color:#000;transform:scaleX(0.8135);transform-origin:0 0;text-rendering:geometricPrecision;">R1</div>
<div class="t" style="left:542.90px;top:581.46px;font-size:9.7px;color:#000;text-rendering:geometricPrecision;">220R</div>
<div class="t" style="left:543.10px;top:594.00px;font-size:9.4px;color:#7c7c7c;transform:scaleX(1.0314);transform-origin:0 0;text-rendering:geometricPrecision;">&lt;TEXT&gt;</div>
<div class="t" style="left:770.60px;top:488.43px;font-size:15.1px;color:#000;transform:scaleX(0.9016);transform-origin:0 0;text-rendering:geometricPrecision;">R2</div>
<div class="t" style="left:769.80px;top:518.76px;font-size:9.7px;color:#000;text-rendering:geometricPrecision;">220R</div>
<div class="t" style="left:769.80px;top:531.00px;font-size:9.4px;color:#7c7c7c;transform:scaleX(1.0314);transform-origin:0 0;text-rendering:geometricPrecision;">&lt;TEXT&gt;</div>
<div class="t" style="left:830.20px;top:478.53px;font-size:15.1px;color:#000;transform:scaleX(0.8497);transform-origin:0 0;text-rendering:geometricPrecision;">D1</div>
<div class="t" style="left:830.00px;top:528.46px;font-size:9.7px;color:#000;text-rendering:geometricPrecision;">LED-RED</div>
<div class="t" style="left:830.00px;top:541.10px;font-size:9.4px;color:#7c7c7c;transform:scaleX(1.0257);transform-origin:0 0;text-rendering:geometricPrecision;">&lt;TEXT&gt;</div>
<div class="t" style="left:770.60px;top:551.43px;font-size:15.1px;color:#000;transform:scaleX(0.9016);transform-origin:0 0;text-rendering:geometricPrecision;">R3</div>
<div class="t" style="left:769.80px;top:581.76px;font-size:9.7px;color:#000;text-rendering:geometricPrecision;">220R</div>
<div class="t" style="left:769.80px;top:594.00px;font-size:9.4px;color:#7c7c7c;transform:scaleX(1.0314);transform-origin:0 0;text-rendering:geometricPrecision;">&lt;TEXT&gt;</div>
<div class="t" style="left:830.20px;top:541.63px;font-size:15.1px;color:#000;transform:scaleX(0.9067);transform-origin:0 0;text-rendering:geometricPrecision;">D2</div>
<div class="t" style="left:830.00px;top:591.46px;font-size:9.7px;color:#000;text-rendering:geometricPrecision;">LED-RED</div>
<div class="t" style="left:830.00px;top:604.10px;font-size:9.4px;color:#7c7c7c;transform:scaleX(1.0257);transform-origin:0 0;text-rendering:geometricPrecision;">&lt;TEXT&gt;</div>
<div class="t" style="left:1073.30px;top:662.21px;font-size:19.5px;color:rgba(140,140,132,0.42);transform:scaleX(1.0143);transform-origin:0 0;">Activate Windows</div>
<div class="t" style="left:1073.30px;top:687.71px;font-size:13.5px;color:rgba(140,140,132,0.42);transform:scaleX(1.1061);transform-origin:0 0;">Go to Settings to activate Windows.</div>
<div id="status" class="a"></div>
<div class="a grip" style="left:3px;top:714px;height:24px"></div>
<div class="a grip" style="left:267px;top:714px;height:24px"></div>
<div class="a grip" style="left:684px;top:714px;height:24px"></div>
<div class="a" style="left:258px;top:711px;width:5px;height:28px;background:#e6eef5"></div>
<div class="a" style="left:675px;top:711px;width:6px;height:28px;background:#e6eef5"></div>
<div class="a" style="left:257px;top:714px;width:1px;height:24px;background:#a2c3db"></div>
<div class="a" style="left:674px;top:714px;width:1px;height:24px;background:#a2c3db"></div>
<div class="a sep" style="left:159px;top:716px;height:19px"></div>
<svg style="left:25px;top:719px" width="9" height="14" viewBox="0 0 9 14"><path d="M0 0L8 6.5L0 13Z" fill="#1a5ac8"/></svg>
<svg style="left:59px;top:719px" width="13" height="14" viewBox="0 0 13 14"><rect x="0" y="0" width="2.5" height="13" fill="#1a5ac8"/><path d="M4 0L12.5 6.5L4 13Z" fill="#1a5ac8"/></svg>
<svg style="left:97px;top:719px" width="9" height="14" viewBox="0 0 9 14"><rect x="0" y="0" width="3" height="13" fill="#1a5ac8"/><rect x="5.5" y="0" width="3" height="13" fill="#1a5ac8"/></svg>
<svg style="left:131px;top:719px" width="14" height="14" viewBox="0 0 14 14"><rect x="0" y="0" width="13.5" height="13" fill="#1a5ac8"/></svg>
<svg style="left:171px;top:719px" width="14" height="14" viewBox="0 0 14 14"><circle cx="6.75" cy="6.75" r="6.5" fill="#5a5a5a"/><circle cx="6.75" cy="6.75" r="5.5" fill="#4a4a4a"/><rect x="5.6" y="5.5" width="2.3" height="5.5" fill="#fff"/><circle cx="6.75" cy="3.3" r="1.2" fill="#fff"/></svg>
<div class="t" style="left:190.00px;top:720.39px;font-size:12px;color:#7c7c7c;transform:scaleX(0.8856);transform-origin:0 0;">No Messages</div>
<div class="t" style="left:277.00px;top:720.39px;font-size:12px;color:#000;transform:scaleX(0.8750);transform-origin:0 0;">Root sheet 1</div>
<div id="taskbar" class="a"></div>
<div class="a" style="left:2px;top:744px;width:24px;height:23px;background:#140a08"></div>
<div class="t" style="left:27px;top:744px;font-family:'Liberation Serif';font-size:21px;font-weight:bold;color:#161616;letter-spacing:1px">DOTA2</div>
<div class="t" style="left:89px;top:742px;font-family:'Liberation Serif';font-size:27px;color:#151515">RU</div>
<div class="t" style="left:31px;top:758px;font-family:'Liberation Serif';font-size:7.5px;font-weight:bold;color:#161616;letter-spacing:.5px">WALLPAPERS</div>
<svg style="left:10px;top:747px" width="16" height="16" viewBox="0 0 16 16"><path d="M0 2.6L6.6 1.6V7.5H0zM7.6 1.4L16 0V7.5H7.6zM0 8.5H6.6V14.4L0 13.5zM7.6 8.5H16V16L7.6 14.6z" fill="#fff"/></svg>
<svg style="left:45px;top:746px" width="17" height="17" viewBox="0 0 17 17"><circle cx="11" cy="6" r="5.2" fill="none" stroke="#fff" stroke-width="1.2"/><path d="M7.2 9.8L1 16" stroke="#fff" stroke-width="1.4"/></svg>
<svg style="left:80px;top:747px" width="20" height="16" viewBox="0 0 20 16"><rect x="3.5" y="0.5" width="13" height="15" fill="none" stroke="#fff" stroke-width="1.2"/><path d="M0.5 3v10M19.5 3v10" stroke="#fff" stroke-width="1.2"/></svg>
<svg style="left:120px;top:747px" width="16" height="16" viewBox="0 0 16 16"><path d="M0 2h6l1.5 2H16v11H0z" fill="#e8b838"/><rect x="0" y="6" width="16" height="9" fill="#f8d868"/><rect x="5" y="9" width="6" height="6" fill="#3a9ae0"/></svg>
<svg style="left:157px;top:746px" width="16" height="17" viewBox="0 0 16 17"><path d="M15 9.5H4.5c.3 3 2.5 4.8 5.5 4.8 1.8 0 3.5-.6 4.8-1.5v2.6c-1.5.9-3.3 1.4-5.3 1.4C4.5 16.8 1 13.5 1 8.8 1 4 4.6.5 9.2.5 13 .5 16 3.3 16 7.5v2zM4.8 6.8h7.5c0-2-1.4-3.5-3.6-3.5-2 0-3.5 1.4-3.9 3.5z" fill="#1a8ae8"/></svg>
<svg style="left:194px;top:746px" width="16" height="16" viewBox="0 0 16 16"><circle cx="8" cy="8" r="7.8" fill="#db4437"/><path d="M8 8L1.2 4.2A7.8 7.8 0 0 0 4.2 14.8z" fill="#0f9d58"/><path d="M8 8L4.2 14.8A7.8 7.8 0 0 0 15.6 6z" fill="#f4b400"/><path d="M8 8L15.6 6A7.8 7.8 0 0 0 13 2z" fill="#db4437"/><circle cx="8" cy="8" r="3.6" fill="#fff"/><circle cx="8" cy="8" r="2.8" fill="#4285f4"/></svg>
<svg style="left:231px;top:746px" width="16" height="16" viewBox="0 0 16 16"><circle cx="8" cy="8" r="7.8" fill="#e86a1a"/><circle cx="9" cy="7" r="4.5" fill="#2a5aa8"/><path d="M1 6c1 7 9 10 13 5-3 2-7 1-8-2 2 1 4 0 4-2-2-1-4-3-3-6C3 2 1 4 1 6z" fill="#f8a020"/></svg>
<svg style="left:267px;top:746px" width="16" height="16" viewBox="0 0 16 16"><rect x="5" y="1" width="11" height="14" fill="#fff"/><path d="M8 4h6M8 7h6M8 10h6" stroke="#2b579a" stroke-width="1.2"/><path d="M0 2L10 0V16L0 14z" fill="#2b579a"/><text x="5" y="11" font-size="8" font-weight="bold" fill="#fff" text-anchor="middle" font-family="Liberation Sans">W</text></svg>
<div class="a" style="left:295px;top:739px;width:36px;height:29px;background:#333"></div>
<svg style="left:304px;top:746px" width="16" height="16" viewBox="0 0 16 16"><ellipse cx="8" cy="8" rx="7.5" ry="3" fill="none" stroke="#d8c890" stroke-width="1" transform="rotate(35 8 8)"/><ellipse cx="8" cy="8" rx="7.5" ry="3" fill="none" stroke="#a0c0e0" stroke-width="1" transform="rotate(-35 8 8)"/><circle cx="8" cy="8" r="2.2" fill="#3a6ab0"/></svg>
<svg style="left:341px;top:746px" width="17" height="16" viewBox="0 0 17 16"><ellipse cx="7" cy="10" rx="7" ry="5.5" fill="#e8eef4"/><circle cx="3.5" cy="9" r="1.3" fill="#e03030"/><circle cx="6" cy="7" r="1.3" fill="#30a030"/><circle cx="9" cy="7.5" r="1.3" fill="#3060e0"/><circle cx="5" cy="12" r="1.3" fill="#f0b020"/><path d="M13 0L15 1 12.5 15 11.5 15z" fill="#e88020"/></svg>
<div class="a" style="left:114px;top:766px;width:28px;height:2px;background:#7ab0e0"></div>
<div class="a" style="left:188px;top:766px;width:28px;height:2px;background:#7ab0e0"></div>
<div class="a" style="left:261px;top:766px;width:28px;height:2px;background:#7ab0e0"></div>
<div class="a" style="left:336px;top:766px;width:28px;height:2px;background:#7ab0e0"></div>
<div class="a" style="left:295px;top:766px;width:36px;height:2px;background:#9ac0e8"></div>
<svg style="left:1177px;top:749px" width="13" height="9" viewBox="0 0 13 9"><path d="M1 7.5L6.5 1.5L12 7.5" fill="none" stroke="#fff" stroke-width="1.2"/></svg>
<svg style="left:1198px;top:748px" width="18" height="12" viewBox="0 0 18 12"><rect x="5.5" y="3.5" width="10" height="6" fill="none" stroke="#fff"/><rect x="6.5" y="4.5" width="6" height="4" fill="#fff"/><rect x="16" y="5" width="1" height="3" fill="#fff"/><path d="M2 0v3M4 0v3M1 3h4v2l-1 2H2L1 5zM3 7v4h3" fill="none" stroke="#fff"/></svg>
<svg style="left:1225px;top:749px" width="13" height="12" viewBox="0 0 13 12"><path d="M1 11a10 10 0 0 1 11-10M3.5 11a7.5 7.5 0 0 1 8.5-7.5M6 11a5 5 0 0 1 6-5" fill="none" stroke="#fff" stroke-width="1.1"/><rect x="8" y="7" width="5" height="5" fill="#fff"/></svg>
<svg style="left:1246px;top:749px" width="17" height="12" viewBox="0 0 17 12"><path d="M1 4h3l4-3.5v11L4 8H1z" fill="none" stroke="#fff"/><path d="M10 3.5a3 3 0 0 1 0 5M12 2a5.5 5.5 0 0 1 0 8M14.5 0.5a8 8 0 0 1 0 11" fill="none" stroke="#bbb" stroke-width="1"/></svg>
<svg style="left:1271px;top:746px" width="16" height="16" viewBox="0 0 16 16"><path d="M0 0H16V12H9.5L8 16 6.5 12H0z" fill="#fff"/><path d="M3 3h10M3 6h10M3 9h6" stroke="#000" stroke-width="1.1"/></svg>
<div class="t" style="left:1301.80px;top:747.19px;font-size:12px;color:#fff;transform:scaleX(0.9448);transform-origin:0 0;">12:23 AM</div>
<div class="a" style="left:1361px;top:739px;width:1px;height:29px;background:#555"></div>
</body></html>
